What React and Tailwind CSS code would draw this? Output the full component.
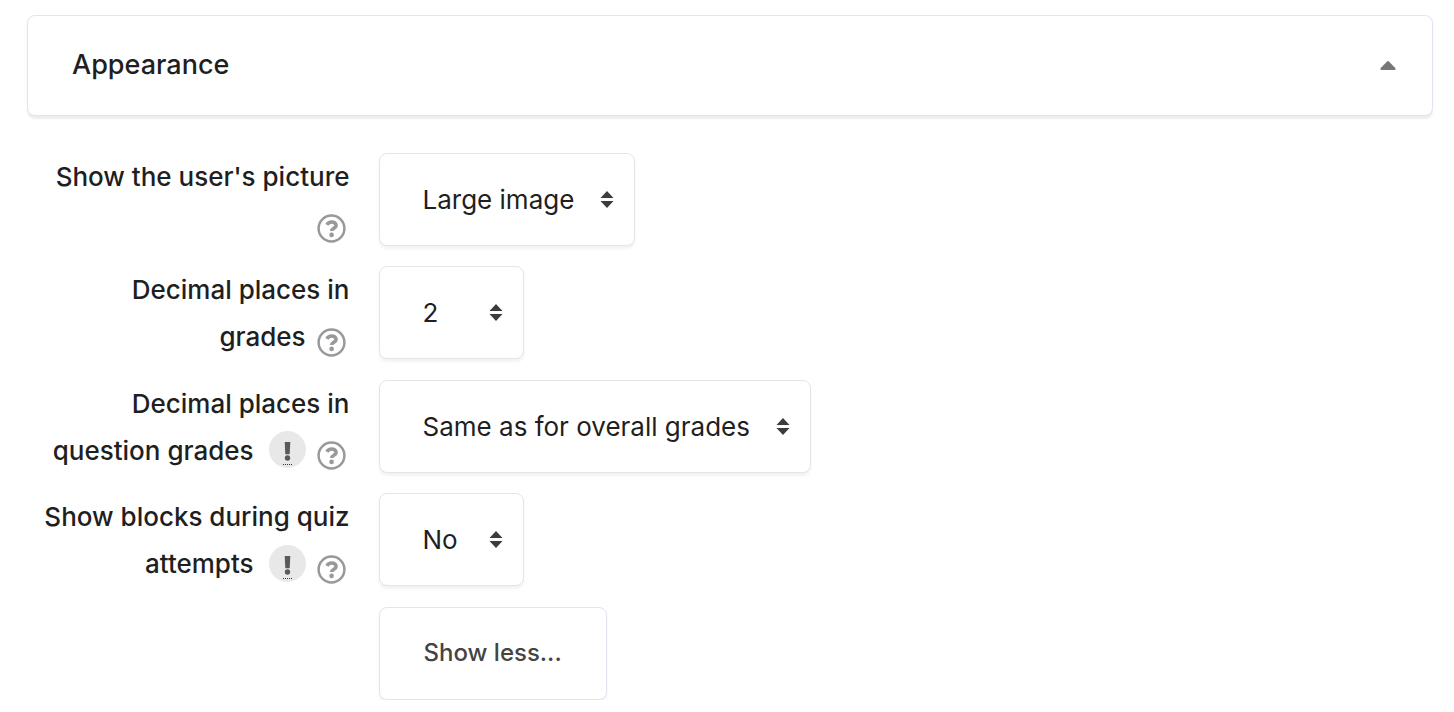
import React, { useState } from 'react';

const fields = [
  {
    id: 'showuserpicture',
    label: "Show the user's picture",
    advanced: false,
    width: 'w-[256px]',
    value: 'Large image',
    options: ['No image', 'Small image', 'Large image'],
  },
  {
    id: 'decimalpoints',
    label: 'Decimal places in grades',
    advanced: false,
    width: 'w-[145px]',
    value: '2',
    options: ['0', '1', '2', '3', '4', '5'],
  },
  {
    id: 'questiondecimalpoints',
    label: 'Decimal places in question grades',
    advanced: true,
    width: 'w-[432px]',
    value: 'Same as for overall grades',
    options: ['Same as for overall grades', '0', '1', '2', '3', '4', '5'],
  },
  {
    id: 'showblocks',
    label: 'Show blocks during quiz attempts',
    advanced: true,
    width: 'w-[145px]',
    value: 'No',
    options: ['No', 'Yes'],
  },
];

function HelpIcon() {
  return (
    <svg className="w-[29px] h-[29px]" viewBox="0 0 29 29" fill="none" stroke="#999" aria-hidden="true">
      <circle cx="14.5" cy="14.5" r="12.9" strokeWidth="2.5" />
      <path d="M9.9 10.8C11 8.8 12.7 8 14.6 8c2.7 0 4.5 1.5 4.5 3.4 0 3-4.4 2.7-4.4 5.7" strokeWidth="3.6" />
      <circle cx="14.6" cy="20.9" r="2.3" fill="#999" stroke="none" />
    </svg>
  );
}

function AdvancedIcon() {
  return (
    <span className="inline-flex items-center justify-center w-[37px] h-[37px] ml-1 mr-[11px] rounded-full bg-[#e8e8e8]">
      <svg className="w-[11px] h-[31px]" viewBox="0 0 11 31" fill="#5a5a5a" aria-hidden="true">
        <path d="M2.7 8h5.6l-.6 12.2H3.3z" />
        <circle cx="5.5" cy="24" r="2.7" />
        <path d="M1 30.5h9" stroke="#333" strokeWidth="1" strokeDasharray="1 1" shapeRendering="crispEdges" />
      </svg>
    </span>
  );
}

function Field({ field }) {
  const [value, setValue] = useState(field.value);

  return (
    <div className="flex items-start mb-[19px]">
      <div className="w-1/4 pl-[14px] pr-[29px] text-right font-medium leading-[47px]">
        <label htmlFor={field.id}>{field.label}</label>{' '}
        <span className="inline-flex items-start align-middle leading-none ml-1 mr-1 mb-1">
          {field.advanced && <AdvancedIcon />}
          <button type="button" aria-label={`Help with ${field.label}`} className="mt-[10px]">
            <HelpIcon />
          </button>
        </span>
      </div>
      <div className="relative">
        <select
          id={field.id}
          value={value}
          onChange={(e) => setValue(e.target.value)}
          className={`${field.width} block h-[93px] appearance-none rounded-lg border border-[#e5e5e8] bg-white pl-[43px] pr-10 shadow-[0_3px_3px_rgba(0,0,0,0.05)]`}
        >
          {field.options.map((option) => (
            <option key={option} value={option}>{option}</option>
          ))}
        </select>
        <svg
          className="pointer-events-none absolute right-[21px] top-[38px] w-[14px] h-[17px]"
          viewBox="0 0 14 17"
          fill="#3c3c3c"
          aria-hidden="true"
        >
          <path d="M7 0l6.5 7H.5zM7 17L.5 10h13z" />
        </svg>
      </div>
    </div>
  );
}

function App() {
  const [open, setOpen] = useState(true);

  return (
    <div className="pl-[27px] pr-[21px] pt-[15px] bg-white text-[#1f1f1f] text-[26px] font-[Inter,sans-serif]">
      <h3>
        <button
          type="button"
          aria-expanded={open}
          onClick={() => setOpen(!open)}
          className="flex w-full h-[101px] items-center justify-between rounded-lg border border-[#e2e4ef] bg-white pl-[44px] pr-9 text-[27px] font-medium shadow-[0_3px_2px_rgba(0,0,0,0.07)]"
        >
          Appearance
          <svg className="w-[16px] h-[9px]" viewBox="0 0 16 9" fill="#777" aria-hidden="true">
            <path d="M8 0q.5 0 .9.4l6.4 6.7q.7.9-.3 1.9H1q-1-1-.3-1.9L7.1.4Q7.5 0 8 0z" />
          </svg>
        </button>
      </h3>
      {open && (
        <form className="pt-[37px]">
          {fields.map((field) => (
            <Field key={field.id} field={field} />
          ))}
          <div className="flex">
            <div className="w-1/4"></div>
            <button
              type="button"
              className="h-[93px] rounded-lg border border-[#e2e4ef] bg-white px-[44px] text-[24px] font-medium text-[#444] shadow-[0_3px_3px_rgba(0,0,0,0.05)]"
            >
              Show less...
            </button>
          </div>
        </form>
      )}
    </div>
  );
}

export default App;
